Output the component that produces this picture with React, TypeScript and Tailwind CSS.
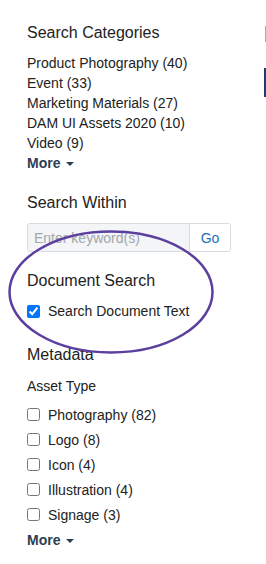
import React from 'react';

const categories = [
  'Product Photography (40)',
  'Event (33)',
  'Marketing Materials (27)',
  'DAM UI Assets 2020 (10)',
  'Video (9)',
];

const assetTypes = ['Photography (82)', 'Logo (8)', 'Icon (4)', 'Illustration (4)', 'Signage (3)'];

const MoreLink: React.FC = () => (
  <div className="flex items-center gap-[6px] h-5 text-sm font-bold text-[#2c3e55]">
    <span>More</span>
    <svg width="8" height="4" viewBox="0 0 8 4" className="mt-[1px]">
      <path d="M0 0 H8 L4 4 Z" fill="#2c3e55" />
    </svg>
  </div>
);

const App: React.FC = () => {
  return (
    <div className="flex w-[266px] h-[564px] bg-white font-['Liberation_Sans',Arial,sans-serif] text-[#222] overflow-hidden">
      <div className="relative flex-1 pl-[27px] pt-[23px]">
        <h2 className="text-base leading-5">Search Categories</h2>
        <ul className="mt-[10px] text-sm leading-5">
          {categories.map((c) => (
            <li key={c}>{c}</li>
          ))}
        </ul>
        <MoreLink />

        <h2 className="mt-5 text-base leading-5">Search Within</h2>
        <div className="mt-[10px] flex w-[204px] h-[29px] border border-[#d6dbe1] rounded-[3px] overflow-hidden">
          <input
            placeholder="Enter keyword(s)"
            className="flex-1 min-w-0 bg-[#f3f5f7] px-[6px] text-sm text-[#222] placeholder:text-[#a2a7ad] outline-none"
          />
          <button className="w-[41px] border-l border-[#d6dbe1] bg-white text-sm text-[#1d6fb8]">Go</button>
        </div>

        <h2 className="mt-[19px] text-base leading-5">Document Search</h2>
        <label className="mt-[10px] flex items-center gap-[8px] h-5 text-sm">
          <input type="checkbox" defaultChecked className="w-[13px] h-[13px]" />
          <span>Search Document Text</span>
        </label>

        <h2 className="mt-6 text-base leading-5">Metadata</h2>
        <div className="mt-[11px] text-sm leading-5">Asset Type</div>
        <div className="mt-[6px] flex flex-col">
          {assetTypes.map((a) => (
            <label key={a} className="flex items-center gap-[8px] h-[25px] text-sm">
              <input type="checkbox" className="w-[13px] h-[13px]" />
              <span>{a}</span>
            </label>
          ))}
        </div>
        <div className="mt-[3px]">
          <MoreLink />
        </div>

        {/* hand-drawn annotation */}
        <svg className="absolute left-0 top-0 pointer-events-none" width="264" height="564">
          <ellipse cx="111" cy="292" rx="101.5" ry="60.5" fill="none" stroke="#5b3f9f" strokeWidth="2.5" />
        </svg>
      </div>
      <div className="w-[2px] flex flex-col items-end">
        <div className="mt-[26px] w-[1px] h-[16px] bg-[#a9a9a9]" />
        <div className="mt-[26px] w-[2px] h-[29px] bg-[#1f3c6b]" />
      </div>
    </div>
  );
};

export default App;
